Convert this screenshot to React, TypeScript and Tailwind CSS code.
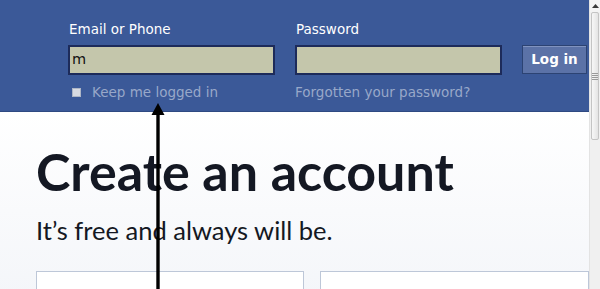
import { Fragment } from 'react'

const head = "font-['DejaVu_Sans',Verdana,sans-serif]"

function Scrollbar() {
  return (
    <div className="flex w-[11px] shrink-0 flex-col bg-[#f0f0f0] border-l border-[#e3e3e3]">
      {/* up arrow */}
      <div className="flex h-[12px] items-center justify-center bg-[#f4f4f4]">
        <svg width="7" height="4" viewBox="0 0 7 4">
          <path d="M3.5 0 L7 4 L0 4 Z" fill="#3a3a3a" />
        </svg>
      </div>
      {/* thumb */}
      <div className="mx-[1px] flex h-[128px] flex-col items-center justify-center rounded-[2px] border border-[#c4c4c4] bg-gradient-to-r from-[#f7f7f7] to-[#e4e4e4]">
        <div className="flex flex-col gap-[1px]">
          {[0, 1, 2, 3].map((i) => (
            <div key={i} className="h-[1px] w-[6px] bg-[#9a9a9a]" />
          ))}
        </div>
      </div>
      <div className="flex-1" />
    </div>
  )
}

export default function App() {
  return (
    <div className="relative flex h-[289px] w-[600px] overflow-hidden bg-white">
      <div className="flex w-[589px] shrink-0 flex-col">
        {/* Top bar */}
        <div className={`h-[112px] shrink-0 border-b border-[#2f4a82] bg-[#3b5998] ${head} text-[13.5px]`}>
          <div className="flex pl-[68px] pt-[19px]">
            <div className="flex w-[227px] flex-col">
              <label className="h-[20px] pl-[1px] leading-[20px] text-white">Email or Phone</label>
              <div className="mt-[6px] flex h-[30px] w-[207px] items-center border-2 border-[#1d2b5a] bg-[#c4c6ab] pl-[2px] text-[14.5px] text-[#111]">
                m
              </div>
              <div className="mt-[8px] flex items-center gap-[11px] pl-[4px] text-[#98a8c9]">
                <span className="h-[9px] w-[9px] border border-[#aeb6c6] bg-[#d8dbe2]" />
                <span className="leading-[18px]">Keep me logged in</span>
              </div>
            </div>
            <div className="flex w-[227px] flex-col">
              <label className="h-[20px] pl-[1px] leading-[20px] text-white">Password</label>
              <div className="mt-[6px] h-[30px] w-[207px] border-2 border-[#1d2b5a] bg-[#c4c6ab]" />
              <div className="mt-[8px] leading-[18px] text-[#98a8c9]">Forgotten your password?</div>
            </div>
            <div className="flex flex-col">
              <div className="h-[20px]" />
              <button className="mt-[6px] flex h-[29px] w-[65px] items-center justify-center border border-[#2c4373] bg-[#5b72a7] font-bold text-white shadow-[inset_0_1px_0_#8093bf]">
                Log in
              </button>
            </div>
          </div>
        </div>

        {/* Body */}
        <div className="flex-1 bg-gradient-to-b from-white to-[#f3f5f9] pl-[36px] font-['Lato',sans-serif] text-[#141823]">
          <h1 className="mt-[31px] text-[52px] font-bold leading-[56px]">Create an account</h1>
          <p className="mt-[16px] text-[25.5px] font-normal leading-[30px]">It’s free and always will be.</p>
          <div className="mt-[26px] flex gap-[16px]">
            <div className="h-[40px] w-[268px] border border-[#bdc7d8] bg-white" />
            <div className="h-[40px] w-[270px] border border-[#bdc7d8] bg-white" />
          </div>
        </div>
      </div>
      <Scrollbar />

      {/* annotation arrow */}
      <svg className="absolute left-[150px] top-[102px]" width="16" height="187" viewBox="0 0 16 187">
        <Fragment>
          <path d="M8 1 L14.5 13 L1.5 13 Z" fill="#000" />
          <rect x="6.3" y="12" width="3.4" height="175" fill="#000" />
        </Fragment>
      </svg>
    </div>
  )
}
